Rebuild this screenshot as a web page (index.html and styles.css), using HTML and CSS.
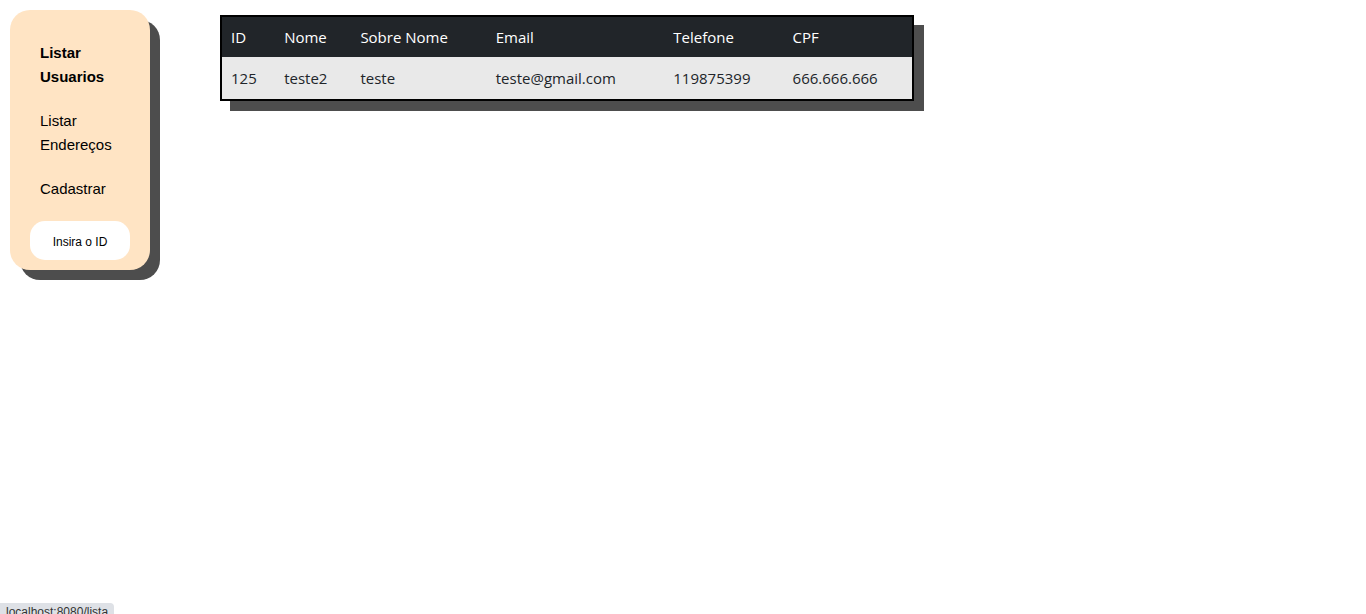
FILE: index.html
```html
<!DOCTYPE html>
<html lang="pt-BR">
<head>
    <meta charset="UTF-8">
    <meta name="viewport" content="width=device-width, initial-scale=1.0">
    <title>Lista de Usuarios</title>
    <link rel="stylesheet" href="styles.css">
</head>
<body>
    <div class="page">
        <nav class="sidebar">
            <a href="#" class="nav-link active">Listar Usuarios</a>
            <a href="#" class="nav-link">Listar Endereços</a>
            <a href="#" class="nav-link">Cadastrar</a>
            <input type="text" class="id-input" placeholder="Insira o ID">
        </nav>

        <div class="table-wrap">
            <table class="users">
                <colgroup>
                    <col style="width: 54px">
                    <col style="width: 76px">
                    <col style="width: 135px">
                    <col style="width: 177px">
                    <col style="width: 119px">
                    <col style="width: 129px">
                </colgroup>
                <thead>
                    <tr>
                        <th>ID</th>
                        <th>Nome</th>
                        <th>Sobre Nome</th>
                        <th>Email</th>
                        <th>Telefone</th>
                        <th>CPF</th>
                    </tr>
                </thead>
                <tbody>
                    <tr>
                        <td>125</td>
                        <td>teste2</td>
                        <td>teste</td>
                        <td>teste@gmail.com</td>
                        <td>119875399</td>
                        <td>666.666.666</td>
                    </tr>
                </tbody>
            </table>
        </div>
    </div>

    <div class="status">localhost:8080/lista</div>
</body>
</html>
```

FILE: styles.css
```css
body {
    margin: 0;
    background: #fff;
    font-family: "Liberation Sans", Arial, sans-serif;
}

.page {
    display: flex;
    align-items: flex-start;
    gap: 70px;
    padding: 10px;
}

.sidebar {
    display: flex;
    flex-direction: column;
    gap: 20px;
    width: 140px;
    box-sizing: border-box;
    padding: 31px 20px 10px 20px;
    background: #ffe4c4;
    border-radius: 20px;
    box-shadow: 10px 10px 0 #4d4d4d;
}

.nav-link {
    display: block;
    padding-left: 10px;
    color: #000;
    text-decoration: none;
    font-size: 15px;
    line-height: 24px;
}

.nav-link.active {
    font-weight: bold;
}

.id-input {
    width: 100px;
    height: 39px;
    box-sizing: border-box;
    padding-top: 4px;
    border: none;
    border-radius: 15px;
    background: #fff;
    text-align: center;
    font-family: "Liberation Sans", Arial, sans-serif;
    font-size: 12px;
    outline: none;
}

.id-input::placeholder {
    color: #000;
}

.table-wrap {
    margin-top: 5px;
}

.users {
    width: 694px;
    border-collapse: collapse;
    table-layout: fixed;
    border: 2px solid #000;
    box-shadow: 10px 10px 0 #4d4d4d;
    font-family: "Open Sans", "Noto Sans", sans-serif;
    font-size: 15px;
    color: #212529;
}

.users th,
.users td {
    padding: 8px 9px;
    line-height: 24px;
    text-align: left;
    font-weight: normal;
    white-space: nowrap;
}

.users td {
    padding-top: 9px;
    padding-bottom: 9px;
}

.users thead tr {
    background: #212529;
    color: #fff;
}

.users tbody tr {
    background: #e9e9e9;
}

.status {
    position: fixed;
    left: 0;
    bottom: 0;
    padding: 0 6px;
    height: 11px;
    line-height: 18px;
    overflow: hidden;
    background: #dee1e6;
    border-top-right-radius: 4px;
    color: #333;
    font-family: "Liberation Sans", Arial, sans-serif;
    font-size: 12px;
}
```
